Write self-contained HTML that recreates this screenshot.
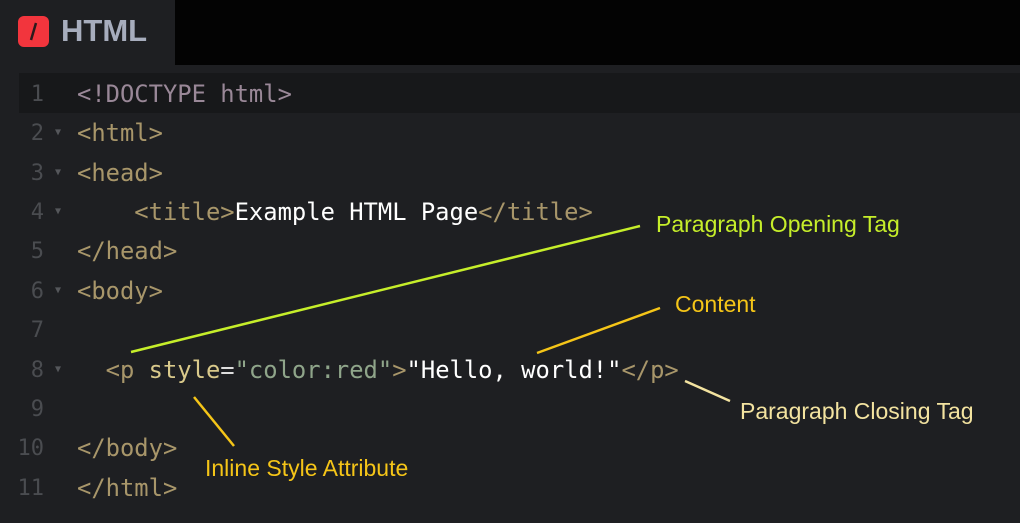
<!DOCTYPE html>
<html><head><style>
body{margin:0;width:1020px;height:523px;background:#1e1f22;position:relative;overflow:hidden;font-family:"DejaVu Sans Mono","Liberation Mono",monospace}
.top{position:absolute;left:175px;top:0;width:845px;height:65px;background:#030303}
.logo{position:absolute;left:18px;top:16px;width:31px;height:31px;background:#f2353d;border-radius:6px}
.ttl{position:absolute;left:61px;top:13px;font:bold 31px "Liberation Sans",sans-serif;color:#a7adbd}
.hl{position:absolute;left:19px;top:73px;width:1001px;height:40px;background:#17181a}
.ln{position:absolute;left:0;width:44px;text-align:right;color:#4a4c50;font-size:22px}
.c{position:absolute;left:77px;font-size:23.8px;white-space:pre;color:#a8966a}
.w{color:#fff}
.ar{position:absolute;left:55px;color:#55575b;font-size:10px}
.a{position:absolute;font:23px "Liberation Sans",sans-serif}
</style></head><body>
<div class="top"></div>
<div class="logo"><svg width="31" height="31"><line x1="13" y1="24" x2="18" y2="7" stroke="#2a1a1c" stroke-width="2.5"/></svg></div>
<div class="ttl">HTML</div>
<div class="hl"></div>
<div class="ln" style="top:82px">1</div><div class="ln" style="top:121px">2</div><div class="ln" style="top:161px">3</div><div class="ln" style="top:200px">4</div><div class="ln" style="top:239px">5</div><div class="ln" style="top:279px">6</div><div class="ln" style="top:318px">7</div><div class="ln" style="top:358px">8</div><div class="ln" style="top:397px">9</div><div class="ln" style="top:436px">10</div><div class="ln" style="top:476px">11</div>
<div class="ar" style="top:127px">▼</div><div class="ar" style="top:167px">▼</div><div class="ar" style="top:206px">▼</div><div class="ar" style="top:285px">▼</div><div class="ar" style="top:364px">▼</div>
<div class="c" style="top:80px;color:#9a8898">&lt;!DOCTYPE html&gt;</div>
<div class="c" style="top:119px">&lt;html&gt;</div>
<div class="c" style="top:159px">&lt;head&gt;</div>
<div class="c" style="top:198px">    &lt;title&gt;<span class="w">Example HTML Page</span>&lt;/title&gt;</div>
<div class="c" style="top:237px">&lt;/head&gt;</div>
<div class="c" style="top:277px">&lt;body&gt;</div>
<div class="c" style="top:356px">  &lt;p <span style="color:#d9c98b">style</span><span style="color:#ddd">=</span><span style="color:#8fa58a">"color:red"</span>&gt;<span class="w">"Hello, world!"</span>&lt;/p&gt;</div>
<div class="c" style="top:434px">&lt;/body&gt;</div>
<div class="c" style="top:474px">&lt;/html&gt;</div>
<svg style="position:absolute;left:0;top:0" width="1020" height="523">
<line x1="131" y1="352" x2="640" y2="226" stroke="#c6ee2a" stroke-width="2.5"/>
<line x1="537" y1="353" x2="660" y2="308" stroke="#f5c518" stroke-width="2.5"/>
<line x1="685" y1="381" x2="730" y2="401" stroke="#f3e3a0" stroke-width="2.5"/>
<line x1="194" y1="397" x2="234" y2="446" stroke="#f5c518" stroke-width="2.5"/>
</svg>
<div class="a" style="left:656px;top:211px;color:#c6ee2a">Paragraph Opening Tag</div>
<div class="a" style="left:675px;top:291px;color:#f5c518">Content</div>
<div class="a" style="left:740px;top:398px;color:#f3e3a0">Paragraph Closing Tag</div>
<div class="a" style="left:205px;top:455px;color:#f5c518">Inline Style Attribute</div>
</body></html>
